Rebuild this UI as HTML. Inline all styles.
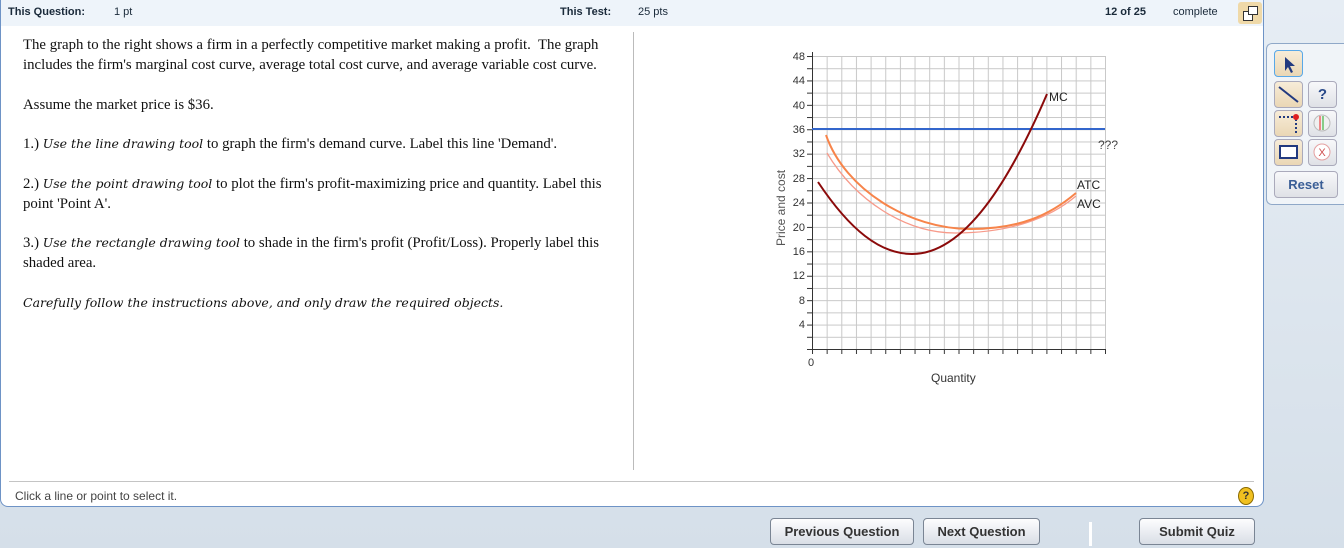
<!DOCTYPE html>
<html><head><style>
body{margin:0;width:1344px;height:548px;position:relative;overflow:hidden;background:linear-gradient(180deg,#e6edf4 0%,#d5dfe9 100%);font-family:"Liberation Sans",sans-serif}
.main{position:absolute;left:0;top:0;width:1264px;height:507px;background:#fff;border:1px solid #6e93c6;border-top:none;border-radius:0 0 8px 8px;box-sizing:border-box}
.hdr{position:absolute;left:0;top:0;width:1262px;height:26px;background:#eef4fa;font-size:11px;color:#1a2a3a}
.hdr span{position:absolute;top:6px}
.txt{position:absolute;left:22px;top:35px;width:590px;font-family:"Liberation Serif",serif;font-size:14.8px;line-height:20px;color:#111}
.txt p{margin:0 0 19.5px 0}
.txt i{font-family:"DejaVu Serif",serif;font-size:12.5px}
.btn{position:absolute;top:518px;height:27px;border:1px solid #7a8594;border-radius:4px;background:linear-gradient(#fdfdfe,#d9dee6);font-size:13px;font-weight:bold;color:#333;text-align:center;line-height:26px;box-sizing:border-box}
.tb{position:absolute;width:29px;height:27px;border:1px solid #aab;border-radius:4px;box-sizing:border-box}
.tan{background:linear-gradient(#f7ecd8,#ead7b5)}
.gry{background:linear-gradient(#f8f8fa,#dfe1e6)}
</style></head><body>
<div class="main">
<div class="hdr">
<span style="left:7px;font-weight:bold">This Question:</span><span style="left:113px">1 pt</span>
<span style="left:559px;font-weight:bold">This Test:</span><span style="left:637px">25 pts</span>
<span style="left:1104px;font-weight:bold">12 of 25</span><span style="left:1172px">complete</span>
<div style="position:absolute;left:1237px;top:2px;width:24px;height:22px;background:#efd9a8;border-radius:3px"><div style="position:absolute;left:5px;top:9px;width:8px;height:8px;border:1px solid #333;background:#fff"></div><div style="position:absolute;left:10px;top:4px;width:8px;height:7px;border:1px solid #333;background:#fff"></div></div>
</div>
<div class="txt">
<p>The graph to the right shows a firm in a perfectly competitive market making a profit.&nbsp; The graph includes the firm's marginal cost curve, average total cost curve, and average variable cost curve.</p>
<p>Assume the market price is $36.</p>
<p>1.) <i>Use the line drawing tool</i> to graph the firm's demand curve. Label this line 'Demand'.</p>
<p>2.) <i>Use the point drawing tool</i> to plot the firm's profit-maximizing price and quantity. Label this point 'Point A'.</p>
<p>3.) <i>Use the rectangle drawing tool</i> to shade in the firm's profit (Profit/Loss). Properly label this shaded area.</p>
<p><i>Carefully follow the instructions above, and only draw the required objects.</i></p>
</div>
<div style="position:absolute;left:632px;top:32px;width:1px;height:438px;background:#bbb"></div>
<div style="position:absolute;left:8px;top:481px;width:1245px;height:1px;background:#c4c4c4"></div>
<div style="position:absolute;left:14px;top:489px;font-size:12px;color:#444">Click a line or point to select it.</div>
<div style="position:absolute;left:1237px;top:487px;width:14px;height:16px;border-radius:50%;background:#f0c020;border:1px solid #8a6a00;font-size:11px;font-weight:bold;text-align:center;line-height:16px;color:#333">?</div>
</div>

<svg style="position:absolute;left:0;top:0" width="1344" height="548">
<defs>
<pattern id="gp" x="812" y="349" width="14.65" height="12.208" patternUnits="userSpaceOnUse">
<path d="M0,0.5 H14.65 M0.5,0 V12.208" stroke="#c8c8c8" stroke-width="1" fill="none"/>
</pattern>
<pattern id="tx" x="812" y="0" width="14.65" height="10" patternUnits="userSpaceOnUse">
<path d="M0.5,0 V10" stroke="#333" stroke-width="1"/>
</pattern>
<pattern id="ty" x="0" y="349" width="10" height="12.208" patternUnits="userSpaceOnUse">
<path d="M0,0.5 H10" stroke="#333" stroke-width="1"/>
</pattern>
</defs>
<rect x="812" y="56" width="294" height="294" fill="url(#gp)"/>
<rect x="812" y="349" width="294" height="5" fill="url(#tx)"/>
<rect x="807" y="56" width="5" height="294" fill="url(#ty)"/>
<line x1="812.5" y1="52" x2="812.5" y2="350" stroke="#333"/>
<line x1="812" y1="349.5" x2="1106" y2="349.5" stroke="#333"/>
<g font-family="Liberation Sans" font-size="11" fill="#333" text-anchor="end">
<text x="805" y="60">48</text><text x="805" y="84">44</text><text x="805" y="109">40</text><text x="805" y="133">36</text><text x="805" y="157">32</text><text x="805" y="182">28</text><text x="805" y="206">24</text><text x="805" y="231">20</text><text x="805" y="255">16</text><text x="805" y="279">12</text><text x="805" y="304">8</text><text x="805" y="328">4</text>
</g>
<text x="808" y="366" font-family="Liberation Sans" font-size="11" fill="#333">0</text>
<text x="931" y="382" font-family="Liberation Sans" font-size="12" fill="#333">Quantity</text>
<text transform="translate(785,246) rotate(-90)" font-family="Liberation Sans" font-size="12" fill="#555">Price and cost</text>
<line x1="812" y1="129" x2="1105" y2="129" stroke="#3366cc" stroke-width="2"/>
<path d="M827,153 C855,200 905,233 955,233 C1010,233 1050,218 1076,196" fill="none" stroke="#f79a8a" stroke-width="1.3"/>
<path d="M826,135 C845,190 910,229 970,229 C1020,229 1050,215 1076,193" fill="none" stroke="#f7844a" stroke-width="2"/>
<path d="M818,182 C850,230 880,254 912,254 C965,254 1010,180 1047,94" fill="none" stroke="#8b0a0a" stroke-width="2"/>
<g font-family="Liberation Sans" font-size="12" fill="#222">
<text x="1049" y="101">MC</text><text x="1077" y="189">ATC</text><text x="1077" y="208">AVC</text><text x="1098" y="149" fill="#444">???</text>
</g>
</svg>

<div style="position:absolute;left:1266px;top:43px;width:80px;height:160px;background:#f0f4f8;border:1px solid #8fa8c8;border-right:none;border-radius:6px 0 0 6px"></div>
<div class="tb tan" style="left:1274px;top:50px;border:1px solid #58a8e8"><svg width="27" height="25"><path d="M10,6 L10,20 L13,16 L16,22 L18,21 L15,15 L20,15 Z" fill="#223a80"/></svg></div>
<div class="tb tan" style="left:1274px;top:81px"><svg width="27" height="25"><line x1="4" y1="5" x2="23" y2="20" stroke="#223a80" stroke-width="2"/></svg></div>
<div class="tb gry" style="left:1308px;top:81px;font-weight:bold;color:#2a4a8a;text-align:center;line-height:25px;font-size:15px">?</div>
<div class="tb tan" style="left:1274px;top:110px"><svg width="27" height="25"><line x1="4" y1="6" x2="20" y2="6" stroke="#223a80" stroke-width="2" stroke-dasharray="2,2"/><line x1="21" y1="8" x2="21" y2="24" stroke="#223a80" stroke-width="2" stroke-dasharray="2,2"/><circle cx="21" cy="6" r="3" fill="#e02020"/></svg></div>
<div class="tb gry" style="left:1308px;top:110px"><svg width="27" height="25"><circle cx="13" cy="12" r="8" fill="#f0f0f0" stroke="#bbb"/><rect x="10" y="5" width="2" height="14" fill="#e88"/><rect x="13" y="5" width="2" height="14" fill="#8c8"/></svg></div>
<div class="tb tan" style="left:1274px;top:139px"><svg width="27" height="25"><rect x="5" y="6" width="17" height="12" fill="#fff" stroke="#223a80" stroke-width="2"/></svg></div>
<div class="tb gry" style="left:1308px;top:139px"><svg width="27" height="25"><circle cx="13" cy="12" r="8" fill="#fff" stroke="#e4a0a0"/><text x="13" y="16" text-anchor="middle" font-size="11" fill="#d05050" font-family="Liberation Sans">X</text></svg></div>
<div class="tb gry" style="left:1274px;top:171px;width:64px;height:27px;font-weight:bold;color:#3a5e96;text-align:center;line-height:25px;font-size:13px">Reset</div>

<div class="btn" style="left:770px;width:144px">Previous Question</div>
<div class="btn" style="left:923px;width:117px">Next Question</div>
<div style="position:absolute;left:1089px;top:522px;width:3px;height:24px;background:#fff"></div>
<div class="btn" style="left:1139px;width:116px">Submit Quiz</div>
</body></html>
